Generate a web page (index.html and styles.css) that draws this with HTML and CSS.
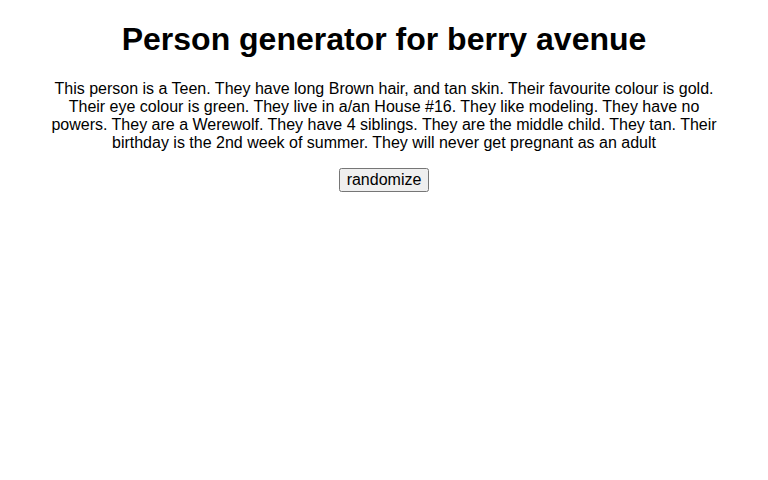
FILE: index.html
```html
<!DOCTYPE html>
<html lang="en">
<head>
    <meta charset="UTF-8" />
    <title>Person generator for berry avenue</title>
    <link rel="stylesheet" href="styles.css">
</head>
<body>
    <h1>Person generator for berry avenue</h1>
    <p id="person">This person is a Teen. They have long Brown hair, and tan skin. Their favourite colour is gold. Their eye colour is green. They live in a/an House #16. They like modeling. They have no powers. They are a Werewolf. They have 4 siblings. They are the middle child. They tan. Their birthday is the 2nd week of summer. They will never get pregnant as an adult</p>
    <button id="randomize">randomize</button>
</body>
</html>
```

FILE: styles.css
```css
body {
    margin: 0 8px;
    font-family: "Liberation Sans", Arial, sans-serif;
    text-align: center;
}

h1 {
    font-size: 32px;
}

p {
    padding: 0 40px;
}

button {
    font-family: "Liberation Sans", Arial, sans-serif;
    font-size: 16px;
}
```
